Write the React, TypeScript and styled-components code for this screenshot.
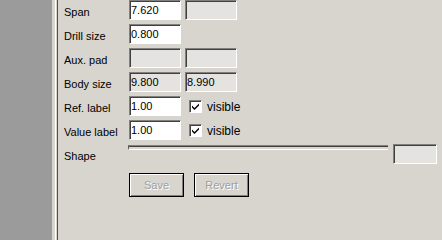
import React from 'react'
import styled, { createGlobalStyle } from 'styled-components'

const GlobalStyle = createGlobalStyle`
  html, body {
    margin: 0;
    padding: 0;
    overflow: hidden;
    background: #d8d5cf;
  }
`

interface FieldProps {
  disabled?: boolean
}

const App = () => {
  return (
    <SPage>
      <GlobalStyle />
      <SLeftStrip />
      <SDivider />
      <SPanel>
        <SRow>
          <SLabel>Span</SLabel>
          <SField>7.620</SField>
          <SField disabled />
        </SRow>
        <SRow>
          <SLabel>Drill size</SLabel>
          <SField>0.800</SField>
        </SRow>
        <SRow>
          <SLabel>Aux. pad</SLabel>
          <SField disabled />
          <SField disabled />
        </SRow>
        <SRow>
          <SLabel>Body size</SLabel>
          <SField disabled>9.800</SField>
          <SField disabled>8.990</SField>
        </SRow>
        <SRow>
          <SLabel>Ref. label</SLabel>
          <SField>1.00</SField>
          <SCheckLabel>
            <SCheckBox>
              <CheckMark />
            </SCheckBox>
            visible
          </SCheckLabel>
        </SRow>
        <SRow>
          <SLabel>Value label</SLabel>
          <SField>1.00</SField>
          <SCheckLabel>
            <SCheckBox>
              <CheckMark />
            </SCheckBox>
            visible
          </SCheckLabel>
        </SRow>
        <SShapeRow>
          <SShapeLabel>Shape</SShapeLabel>
          <SGroove />
          <SShapeBox />
        </SShapeRow>
        <SButtonRow>
          <SButton disabled>Save</SButton>
          <SButton disabled>Revert</SButton>
        </SButtonRow>
      </SPanel>
    </SPage>
  )
}

const CheckMark = () => (
  <svg width="9" height="9" viewBox="0 0 9 9">
    <path d="M1 3.5 L3.5 6 L8 1.5 L8 3.5 L3.5 8 L1 5.5 Z" fill="#000" />
  </svg>
)

const SPage = styled.div`
  display: flex;
  width: 442px;
  height: 100vh;
  min-height: 215px;
  font-family: 'Liberation Sans', Arial, sans-serif;
  font-size: 11px;
  color: #000;
`

const SLeftStrip = styled.div`
  width: 52px;
  background: #9b9b9b;
`

const SDivider = styled.div`
  width: 6px;
  background: linear-gradient(
    to right,
    #d8d5cf 0 3px,
    #ffffff 3px 4px,
    #d8d5cf 4px 5px,
    #505050 5px 6px
  );
`

const SPanel = styled.div`
  flex: 1;
  display: flex;
  flex-direction: column;
  padding-left: 6px;
  background: #d8d5cf;
`

const SRow = styled.div`
  display: flex;
  align-items: center;
  height: 20px;
  margin-bottom: 4px;
`

const SLabel = styled.div`
  width: 65px;
  padding-top: 3px;
  white-space: nowrap;
`

const SField = styled.div<FieldProps>`
  box-sizing: border-box;
  width: 52px;
  height: 20px;
  margin-right: 4px;
  padding: 3px 0 0 1px;
  background: ${({ disabled }) => (disabled ? '#e4e3e0' : '#ffffff')};
  border-top: 1px solid #808080;
  border-left: 1px solid #808080;
  border-bottom: 1px solid #ffffff;
  border-right: 1px solid #ffffff;
  box-shadow: inset 1px 1px 0 #404040;
  line-height: 13px;
`

const SCheckLabel = styled.div`
  display: flex;
  align-items: center;
  margin-left: 4px;
  padding-top: 1px;
  font-size: 12px;
`

const SCheckBox = styled.div`
  box-sizing: border-box;
  width: 13px;
  height: 13px;
  margin-right: 5px;
  display: flex;
  align-items: center;
  justify-content: center;
  background: #ffffff;
  border-top: 1px solid #808080;
  border-left: 1px solid #808080;
  border-bottom: 1px solid #ffffff;
  border-right: 1px solid #ffffff;
  box-shadow: inset 1px 1px 0 #404040;
`

const SShapeRow = styled.div`
  display: flex;
  align-items: flex-start;
  height: 20px;
`

const SShapeLabel = styled.div`
  width: 64px;
  padding-top: 6px;
`

const SGroove = styled.div`
  box-sizing: border-box;
  width: 260px;
  height: 5px;
  margin-top: 1px;
  border-top: 1px solid #808080;
  border-left: 1px solid #606060;
  border-bottom: 1px solid #ffffff;
  box-shadow: inset 0 1px 0 #404040;
  background: #d8d5cf;
`

const SShapeBox = styled.div`
  box-sizing: border-box;
  width: 44px;
  height: 20px;
  margin-left: 5px;
  background: #e4e3e0;
  border-top: 1px solid #808080;
  border-left: 1px solid #808080;
  border-bottom: 1px solid #ffffff;
  border-right: 1px solid #ffffff;
  box-shadow: inset 1px 1px 0 #404040;
`

const SButtonRow = styled.div`
  display: flex;
  gap: 10px;
  margin-top: 9px;
  padding-left: 65px;
`

const SButton = styled.button`
  box-sizing: border-box;
  width: 55px;
  height: 24px;
  padding: 0;
  background: #d8d5cf;
  border: 1px solid #000;
  box-shadow: inset 1px 1px 0 #ffffff, inset -1px -1px 0 #808080;
  font-family: 'Liberation Sans', Arial, sans-serif;
  font-size: 11px;
  color: #a09e9a;
  text-shadow: 1px 1px 0 #ffffff;
`

export default App
